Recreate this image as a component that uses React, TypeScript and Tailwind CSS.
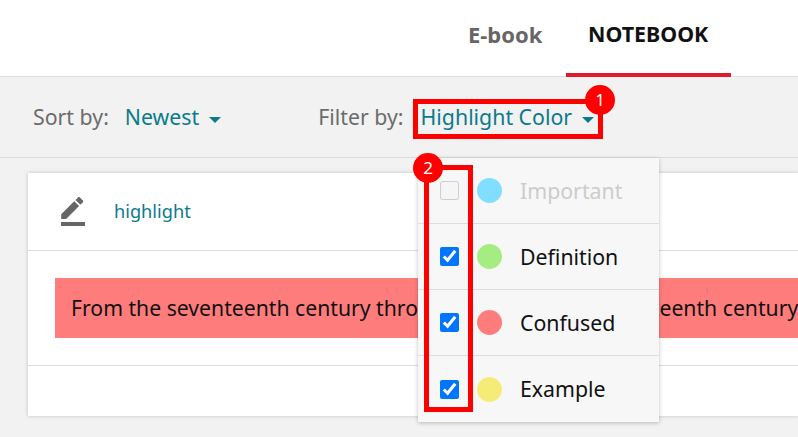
const teal = "text-[#0b7a8c]";

function Caret() {
  return <span className="ml-[10px] mt-[5px] h-0 w-0 border-x-[6px] border-t-[6px] border-x-transparent border-t-[#0b7a8c]" />;
}

function PencilIcon() {
  return (
    <svg width="24" height="29" viewBox="0 0 24 29" fill="#666666">
      <g transform="translate(-5 0) scale(1.3)">
        <path d="M17.75 7L14 3.25l-10 10V17h3.75l10-10zm2.96-2.96c.39-.39.39-1.02 0-1.41L18.37.29c-.39-.39-1.02-.39-1.41 0L15 2.25 18.75 6l1.96-1.96z" />
      </g>
      <rect x="0" y="25" width="24" height="4" />
    </svg>
  );
}

const filters = [
  { label: "Important", color: "bg-[#80dfff]", checked: false },
  { label: "Definition", color: "bg-[#a5ec82]", checked: true },
  { label: "Confused", color: "bg-[#ff7c7c]", checked: true },
  { label: "Example", color: "bg-[#f5ec78]", checked: true },
];

function Badge({ n, className }: { n: number; className: string }) {
  return (
    <div className={`absolute flex h-[30px] w-[30px] items-center justify-center rounded-full bg-[#ff0000] text-[17px] text-white ${className}`}>
      {n}
    </div>
  );
}

export default function App() {
  return (
    <div className="relative flex h-[437px] w-[798px] flex-col overflow-hidden bg-[#f2f2f2] font-['Noto_Sans',sans-serif]">
      <header className="flex h-[77px] shrink-0 items-stretch border-b border-[#dddddd] bg-white pl-[468px]">
        <div className="w-[75px] pt-[19px] text-[22px] font-bold leading-[30px] text-[#666666]">E-book</div>
        <div className="ml-[23px] h-[77px] w-[165px] border-b-4 border-[#e2192c] pl-[22px] pt-[19px] text-[21.4px] font-bold leading-[30px] text-[#111111]">
          NOTEBOOK
        </div>
      </header>

      <div className="flex h-[81px] shrink-0 items-center border-b border-[#dddddd] pl-[33px] text-[21.3px]">
        <span className="text-[#6b6b6b]">Sort by:</span>
        <span className={`ml-[16px] ${teal}`}>Newest</span>
        <Caret />
        <span className="ml-[97px] text-[#6b6b6b]">Filter by:</span>
        <span className={`ml-[17px] ${teal}`}>Highlight Color</span>
        <Caret />
      </div>

      <div className="ml-[28px] mt-[15px] h-[243px] bg-white shadow-[0_0_4px_rgba(0,0,0,0.2)]">
        <div className="flex h-[78px] items-center border-b border-[#dddddd] pl-[33px]">
          <PencilIcon />
          <span className={`ml-[29px] text-[18.2px] ${teal}`}>highlight</span>
        </div>
        <div className="h-[115px] border-b border-[#dddddd] pl-[27px] pt-[27px]">
          <div className="flex h-[60px] items-center whitespace-nowrap bg-[#ff7c7c] pl-[16px] text-[21.2px] text-[#111111]">
            From the seventeenth century through the end of the eighteenth century
          </div>
        </div>
      </div>

      <div className="absolute left-[418px] top-[158px] w-[241px] bg-[#f7f7f7] shadow-[0_1px_4px_rgba(0,0,0,0.25)]">
        {filters.map((f, i) => (
          <div key={f.label} className={`flex h-[66px] items-center pl-[22px] ${i < 3 ? "border-b border-[#dddddd]" : ""}`}>
            <input type="checkbox" checked={f.checked} disabled={!f.checked} readOnly className="h-[19px] w-[19px]" />
            <span className={`ml-[18px] h-[25px] w-[25px] rounded-full ${f.color}`} />
            <span className={`ml-[18px] text-[21.3px] ${f.checked ? "text-[#111111]" : "text-[#cccccc]"}`}>{f.label}</span>
          </div>
        ))}
      </div>

      <div className="absolute left-[413px] top-[99px] h-[40px] w-[190px] border-[5px] border-[#ff0000]" />
      <div className="absolute left-[424px] top-[165px] h-[247px] w-[49px] border-[5px] border-[#ff0000]" />
      <Badge n={1} className="left-[585px] top-[85px]" />
      <Badge n={2} className="left-[413px] top-[153px]" />
    </div>
  );
}
